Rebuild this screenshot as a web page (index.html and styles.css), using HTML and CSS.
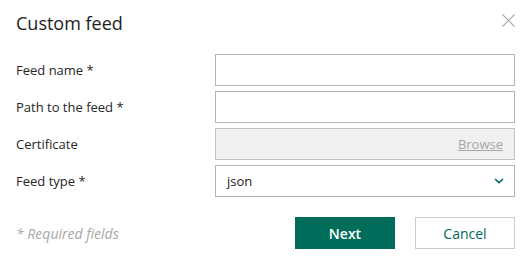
FILE: index.html
```html
<!DOCTYPE html>
<html>
<head>
<meta charset="utf-8">
<link rel="stylesheet" href="styles.css">
</head>
<body>
<div class="dialog">
  <div class="header">
    <h1 class="title">Custom feed</h1>
    <button class="close" aria-label="Close">
      <svg width="13" height="13" viewBox="0 0 13 13"><path d="M0.5 0.5L12.5 12.5M12.5 0.5L0.5 12.5" stroke="#a8a8a8" stroke-width="1.1" fill="none"/></svg>
    </button>
  </div>
  <div class="form">
    <label class="label">Feed name *</label>
    <div class="input"></div>
    <label class="label">Path to the feed *</label>
    <div class="input"></div>
    <label class="label">Certificate</label>
    <div class="input disabled"><span class="browse">Browse</span></div>
    <label class="label">Feed type *</label>
    <div class="input select"><span>json</span>
      <svg width="10" height="6" viewBox="0 0 10 6"><path d="M1 1L5 4.6L9 1" stroke="#00695c" stroke-width="1.6" fill="none"/></svg>
    </div>
  </div>
  <div class="footer">
    <span class="note">* Required fields</span>
    <div class="buttons">
      <button class="btn primary">Next</button>
      <button class="btn secondary">Cancel</button>
    </div>
  </div>
</div>
</body>
</html>
```

FILE: styles.css
```css
html, body {
  margin: 0;
  padding: 0;
  background: #ffffff;
}
body {
  font-family: "Open Sans", "Liberation Sans", sans-serif;
  color: #1d1d1b;
}
.dialog {
  width: 530px;
  height: 265px;
  box-sizing: border-box;
  padding: 0 15px 0 16px;
}
.header {
  display: flex;
  justify-content: space-between;
  align-items: flex-start;
  height: 54px;
}
.title {
  margin: 0;
  padding-top: 10px;
  font-size: 18px;
  font-weight: 400;
  line-height: 26px;
  color: #1d1d1b;
}
.close {
  border: 0;
  background: none;
  padding: 0;
  margin-top: 14px;
  width: 13px;
  height: 13px;
  display: block;
}
.close svg { display: block; }
.form {
  display: grid;
  grid-template-columns: 199px 300px;
  row-gap: 5px;
  align-items: center;
}
.label {
  font-size: 13px;
  color: #262626;
}
.input {
  height: 32px;
  box-sizing: border-box;
  border: 1px solid #b3b3b3;
  background: #fff;
  display: flex;
  align-items: center;
  padding: 0 11px;
  font-size: 13px;
}
.input.disabled {
  background: #f0f0f0;
  border-color: #c3c3c3;
  justify-content: flex-end;
}
.browse {
  color: #a6a6a6;
  text-decoration: underline;
}
.select {
  justify-content: space-between;
  padding-right: 10px;
}
.select svg { display: block; }
.footer {
  display: flex;
  justify-content: space-between;
  align-items: center;
  margin-top: 20px;
}
.note {
  font-size: 14px;
  font-style: italic;
  color: #a8a8a8;
}
.buttons {
  display: flex;
  gap: 20px;
}
.btn {
  width: 100px;
  height: 32px;
  box-sizing: border-box;
  font-family: inherit;
  font-size: 14px;
  cursor: pointer;
}
.primary {
  background: #006d5b;
  border: 0;
  color: #fff;
  font-weight: 600;
}
.secondary {
  background: #fff;
  border: 1px solid #cccccc;
  color: #00695c;
}
```
